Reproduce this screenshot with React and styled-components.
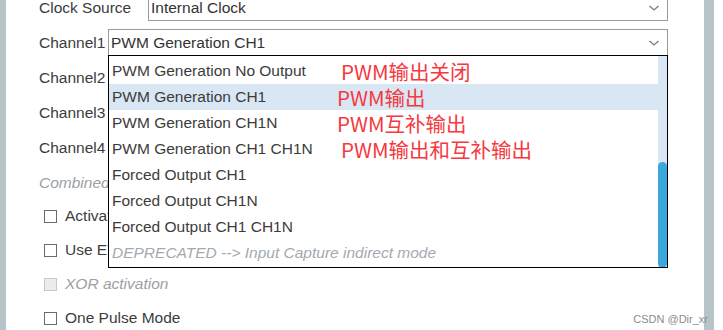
import React from 'react';
import styled, { createGlobalStyle } from 'styled-components';

const GlobalStyle = createGlobalStyle`
    html, body {
        margin: 0;
        padding: 0;
        background: #ffffff;
        overflow: hidden;
    }
    body {
        font-family: 'Liberation Sans', Arial, sans-serif;
    }
`

const Page = styled.div`
    position: relative;
    display: flex;
    width: 723px;
    height: 330px;
    overflow: hidden;
    background: #ffffff;
`

const SideBar = styled.div`
    width: ${p => p.width}px;
    flex-shrink: 0;
    background: #b8c4ca;
`

const Gap = styled.div`
    width: 9px;
    flex-shrink: 0;
`

const Main = styled.div`
    flex: 1;
    padding: 0 36px 0 33px;
    margin-top: -6px;
    display: flex;
    flex-direction: column;
`

const Fields = styled.div`
    display: flex;
    flex-direction: column;
    gap: 8px;
`

const Row = styled.div`
    position: relative;
    display: flex;
    align-items: center;
    height: 27px;
`

const Label = styled.div`
    width: ${p => p.width}px;
    flex-shrink: 0;
    font-size: 15.5px;
    color: ${p => (p.muted ? '#9aa0a6' : '#3c3c3c')};
    font-style: ${p => (p.muted ? 'italic' : 'normal')};
    white-space: nowrap;
`

const Select = styled.div`
    position: relative;
    flex: 1;
    height: 27px;
    box-sizing: border-box;
    border: 1px solid #9a9a9a;
    background: #ffffff;
    display: flex;
    align-items: center;
    padding: 0 0 0 2px;
    font-size: 15.5px;
    color: #333333;
`

const Chevron = styled.svg`
    position: absolute;
    right: 7px;
    top: 10px;
`

const Dropdown = styled.div`
    position: absolute;
    left: 69px;
    right: 0;
    top: 26px;
    z-index: 2;
    box-sizing: border-box;
    border: 1px solid #000000;
    background: #ffffff;
    padding-top: 2px;
    padding-bottom: 1px;
    padding-right: 9px;
`

const ScrollTrack = styled.div`
    position: absolute;
    top: 0;
    right: 0;
    bottom: 0;
    width: 9px;
    background: #d9e7f4;
`

const ScrollThumb = styled.div`
    position: absolute;
    right: 0;
    bottom: 0;
    width: 9px;
    height: 105px;
    border-radius: 5px 5px 4px 4px;
    background: #3aa8dc;
`

const Option = styled.div`
    position: relative;
    height: 26px;
    display: flex;
    align-items: center;
    padding-left: 3px;
    font-size: 15.5px;
    white-space: nowrap;
    background: ${p => (p.selected ? '#d9e7f4' : 'transparent')};
    color: ${p => (p.deprecated ? '#a3a9b0' : '#3c3c3c')};
    font-style: ${p => (p.deprecated ? 'italic' : 'normal')};
`

const Note = styled.span`
    position: absolute;
    left: ${p => p.left}px;
    top: 50%;
    transform: translateY(-50%);
    font-family: 'Noto Sans CJK SC', 'Noto Sans', sans-serif;
    font-size: 20.5px;
    color: #f5393f;
    white-space: nowrap;
`

const Checks = styled.div`
    display: flex;
    flex-direction: column;
    margin-top: 3px;
`

const CheckRow = styled.div`
    display: flex;
    align-items: center;
    height: 34px;
    padding-left: 5px;
    font-size: 15.5px;
    color: ${p => (p.disabled ? '#9aa0a6' : '#3c3c3c')};
    font-style: ${p => (p.disabled ? 'italic' : 'normal')};
    white-space: nowrap;
`

const Box = styled.span`
    width: 13px;
    height: 13px;
    box-sizing: border-box;
    margin-right: 8px;
    flex-shrink: 0;
    border: 1px solid ${p => (p.disabled ? '#c6c9cc' : '#6b6b6b')};
    background: ${p => (p.disabled ? '#ececec' : '#ffffff')};
`

const Watermark = styled.div`
    position: absolute;
    right: 15px;
    bottom: 5px;
    font-family: 'Liberation Sans', Arial, sans-serif;
    font-size: 11px;
    color: #8c8c8c;
`

const options = [
    { text: 'PWM Generation No Output', note: 'PWM输出关闭', left: 232 },
    { text: 'PWM Generation CH1', note: 'PWM输出', left: 228, selected: true },
    { text: 'PWM Generation CH1N', note: 'PWM互补输出', left: 228 },
    { text: 'PWM Generation CH1 CH1N', note: 'PWM输出和互补输出', left: 232 },
    { text: 'Forced Output CH1' },
    { text: 'Forced Output CH1N' },
    { text: 'Forced Output CH1 CH1N' },
    { text: 'DEPRECATED --> Input Capture indirect mode', deprecated: true },
]

const Arrow = () => (
    <Chevron width="12" height="7" viewBox="0 0 12 7">
        <path d="M1.5 1 L6 5 L10.5 1" fill="none" stroke="#7a7a7a" strokeWidth="1.3" />
    </Chevron>
)

const SelectField = ({ label, labelWidth, value, children }) => (
    <Row>
        <Label width={labelWidth}>{label}</Label>
        <Select>
            {value}
            <Arrow />
        </Select>
        {children}
    </Row>
)

export default function App() {
    return (
        <Page>
            <GlobalStyle />
            <SideBar width={6} />
            <Main>
                <Fields>
                    <SelectField label="Clock Source" labelWidth={109} value="Internal Clock" />
                    <SelectField label="Channel1" labelWidth={69} value="PWM Generation CH1">
                        <Dropdown>
                            <ScrollTrack>
                                <ScrollThumb />
                            </ScrollTrack>
                            {options.map(o => (
                                <Option key={o.text} selected={o.selected} deprecated={o.deprecated}>
                                    {o.text}
                                    {o.note && <Note left={o.left}>{o.note}</Note>}
                                </Option>
                            ))}
                        </Dropdown>
                    </SelectField>
                    <SelectField label="Channel2" labelWidth={69} value="Disable" />
                    <SelectField label="Channel3" labelWidth={69} value="Disable" />
                    <SelectField label="Channel4" labelWidth={69} value="Disable" />
                    <Row>
                        <Label width={69} muted>Combined Channels</Label>
                    </Row>
                </Fields>
                <Checks>
                    <CheckRow><Box />Activate-Clear</CheckRow>
                    <CheckRow><Box />Use ETR2 as Clearing Source</CheckRow>
                    <CheckRow disabled><Box disabled />XOR activation</CheckRow>
                    <CheckRow><Box />One Pulse Mode</CheckRow>
                </Checks>
            </Main>
            <SideBar width={10} />
            <Gap />
            <Watermark>CSDN @Dir_xr</Watermark>
        </Page>
    );
}
